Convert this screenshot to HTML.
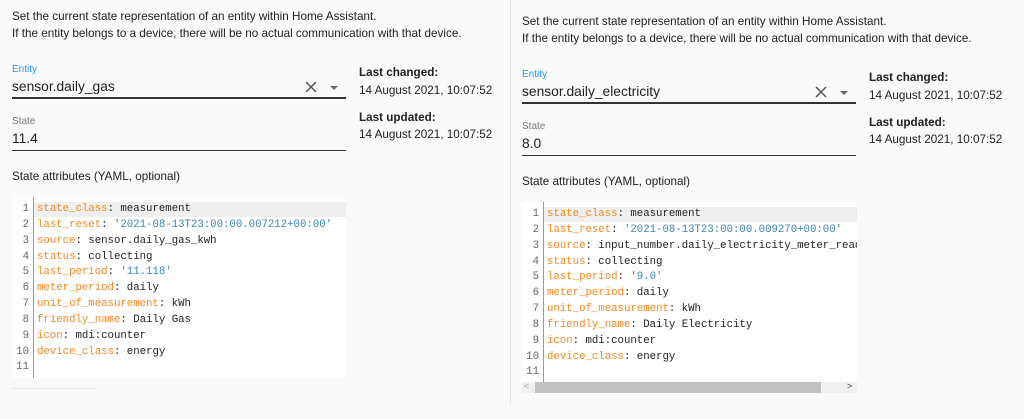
<!DOCTYPE html>
<html><head><style>
*{margin:0;padding:0;box-sizing:border-box}
body{width:1024px;height:414px;background:#fafafa;font-family:"Liberation Sans",sans-serif;color:#212121;position:relative;overflow:hidden}
.p{position:absolute;top:0;width:510px;height:414px}
.a{position:absolute;white-space:nowrap}
.desc{font-size:11.7px;line-height:17px;left:12px;top:8px}
.lab{font-size:10px;color:#777}
.val{font-size:13.8px}
.ul{position:absolute;left:12px;width:334px;height:1px;background:#333}
.b{font-size:11.7px;font-weight:bold}
.d{font-size:11.7px}
.code{position:absolute;left:12px;top:197px;width:334px;height:181px;background:#fff;font-family:"Liberation Mono",monospace;font-size:10.7px}
.code .g{position:absolute;left:21px;top:0;bottom:0;width:1px;background:#999}
.ln{position:absolute;left:0;width:17px;text-align:right;color:#666}
.tx{position:absolute;left:25px;white-space:pre;color:#222}
.k{color:#f5871f}.s{color:#3b84b7}
.hl{position:absolute;left:22px;right:0;top:5px;height:15px;background:#efefef}
</style></head><body>
<div style="position:absolute;left:510px;top:0;width:1px;height:404px;background:#e4e4e4"></div>

<div class="p" style="left:0">
<div class="a desc">Set the current state representation of an entity within Home Assistant.<br>If the entity belongs to a device, there will be no actual communication with that device.</div>
<div class="a lab" style="left:12px;top:64px;color:#2196f3">Entity</div>
<div class="a val" style="left:12px;top:79px">sensor.daily_gas</div>
<svg class="a" style="left:304px;top:80px" width="40" height="14"><path d="M2 2L12 12M12 2L2 12" stroke="#555" stroke-width="1.5"/><path d="M26 6h8l-4 4z" fill="#666"/></svg>
<div class="ul" style="top:97px;height:2px"></div>
<div class="a lab" style="left:12px;top:116px">State</div>
<div class="a val" style="left:12px;top:131px">11.4</div>
<div class="ul" style="top:150px"></div>
<div class="a b" style="left:359px;top:66px">Last changed:</div>
<div class="a d" style="left:359px;top:84px">14 August 2021, 10:07:52</div>
<div class="a b" style="left:359px;top:111px">Last updated:</div>
<div class="a d" style="left:359px;top:128px">14 August 2021, 10:07:52</div>
<div class="a d" style="left:12px;top:170px">State attributes (YAML, optional)</div>
<div class="code"><div class="hl"></div><div class="g"></div>
<div class="ln" style="top:6px">1</div><div class="tx" style="top:6px"><span class="k">state_class</span>: measurement</div>
<div class="ln" style="top:22px">2</div><div class="tx" style="top:22px"><span class="k">last_reset</span>: <span class="s">'2021-08-13T23:00:00.007212+00:00'</span></div>
<div class="ln" style="top:38px">3</div><div class="tx" style="top:38px"><span class="k">source</span>: sensor.daily_gas_kwh</div>
<div class="ln" style="top:54px">4</div><div class="tx" style="top:54px"><span class="k">status</span>: collecting</div>
<div class="ln" style="top:69px">5</div><div class="tx" style="top:69px"><span class="k">last_period</span>: <span class="s">'11.118'</span></div>
<div class="ln" style="top:85px">6</div><div class="tx" style="top:85px"><span class="k">meter_period</span>: daily</div>
<div class="ln" style="top:101px">7</div><div class="tx" style="top:101px"><span class="k">unit_of_measurement</span>: kWh</div>
<div class="ln" style="top:117px">8</div><div class="tx" style="top:117px"><span class="k">friendly_name</span>: Daily Gas</div>
<div class="ln" style="top:133px">9</div><div class="tx" style="top:133px"><span class="k">icon</span>: mdi:counter</div>
<div class="ln" style="top:149px">10</div><div class="tx" style="top:149px"><span class="k">device_class</span>: energy</div>
<div class="ln" style="top:164px">11</div>
</div>
<div style="position:absolute;left:12px;top:388px;width:84px;height:1px;background:#e8e8e8"></div>
</div>

<div class="p" style="left:510px;top:5px">
<div class="a desc">Set the current state representation of an entity within Home Assistant.<br>If the entity belongs to a device, there will be no actual communication with that device.</div>
<div class="a lab" style="left:12px;top:64px;color:#2196f3">Entity</div>
<div class="a val" style="left:12px;top:79px">sensor.daily_electricity</div>
<svg class="a" style="left:304px;top:80px" width="40" height="14"><path d="M2 2L12 12M12 2L2 12" stroke="#555" stroke-width="1.5"/><path d="M26 6h8l-4 4z" fill="#666"/></svg>
<div class="ul" style="top:97px;height:2px"></div>
<div class="a lab" style="left:12px;top:116px">State</div>
<div class="a val" style="left:12px;top:131px">8.0</div>
<div class="ul" style="top:150px"></div>
<div class="a b" style="left:359px;top:66px">Last changed:</div>
<div class="a d" style="left:359px;top:84px">14 August 2021, 10:07:52</div>
<div class="a b" style="left:359px;top:111px">Last updated:</div>
<div class="a d" style="left:359px;top:128px">14 August 2021, 10:07:52</div>
<div class="a d" style="left:12px;top:170px">State attributes (YAML, optional)</div>
<div class="code" style="overflow:hidden;width:335px;height:180px"><div class="hl"></div><div class="g"></div>
<div class="ln" style="top:6px">1</div><div class="tx" style="top:6px"><span class="k">state_class</span>: measurement</div>
<div class="ln" style="top:22px">2</div><div class="tx" style="top:22px"><span class="k">last_reset</span>: <span class="s">'2021-08-13T23:00:00.009270+00:00'</span></div>
<div class="ln" style="top:38px">3</div><div class="tx" style="top:38px"><span class="k">source</span>: input_number.daily_electricity_meter_reading</div>
<div class="ln" style="top:54px">4</div><div class="tx" style="top:54px"><span class="k">status</span>: collecting</div>
<div class="ln" style="top:69px">5</div><div class="tx" style="top:69px"><span class="k">last_period</span>: <span class="s">'9.0'</span></div>
<div class="ln" style="top:85px">6</div><div class="tx" style="top:85px"><span class="k">meter_period</span>: daily</div>
<div class="ln" style="top:101px">7</div><div class="tx" style="top:101px"><span class="k">unit_of_measurement</span>: kWh</div>
<div class="ln" style="top:117px">8</div><div class="tx" style="top:117px"><span class="k">friendly_name</span>: Daily Electricity</div>
<div class="ln" style="top:133px">9</div><div class="tx" style="top:133px"><span class="k">icon</span>: mdi:counter</div>
<div class="ln" style="top:149px">10</div><div class="tx" style="top:149px"><span class="k">device_class</span>: energy</div>
<div class="ln" style="top:164px">11</div>
</div>
<div style="position:absolute;left:12px;top:377px;width:335px;height:11px;background:#f0f0f0"></div>
<div style="position:absolute;left:25px;top:377px;width:286px;height:11px;background:#c1c1c1"></div>
<div class="a" style="left:14px;top:376px;font-size:9px;color:#aaa">&lt;</div>
<div class="a" style="left:337px;top:376px;font-size:9px;color:#333">&gt;</div>
</div>
</body></html>
